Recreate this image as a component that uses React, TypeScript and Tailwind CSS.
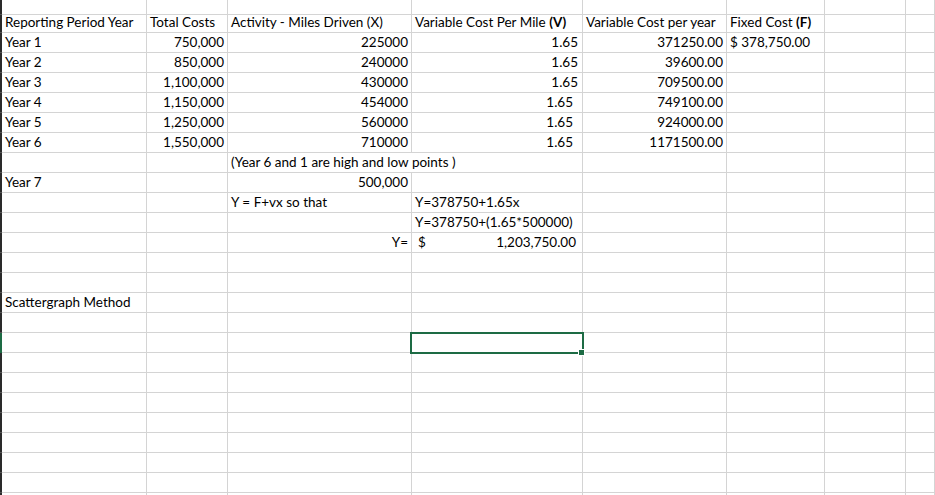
import React from "react";

/* Sheet layout: strip | A | B | C | D | E | F | G | H */
const cols = "grid grid-cols-[2px_145px_81px_184px_171px_144px_98px_81px_1fr]";
const cell = "relative border-r border-b border-[#d4d4d4] flex items-end whitespace-nowrap";
const open = "relative border-b border-[#d4d4d4] flex items-end whitespace-nowrap overflow-visible z-10";

type Cell = { text?: React.ReactNode; align?: "l" | "r"; pr?: string; flow?: boolean };

const Row: React.FC<{ cells: Cell[]; h?: string; selRow?: boolean; children?: React.ReactNode }> = ({
  cells,
  h = "h-[20px]",
  selRow,
}) => {
  return (
    <div className={`${cols} ${h}`}>
      <div className={selRow ? "bg-[#1d6b44]" : "bg-[#2a2a2a] border-b border-[#555]"}></div>
      {cells.map((c, i) => (
        <div
          key={i}
          className={`${c.flow ? open : cell} ${c.align === "r" ? "justify-end" : "justify-start"} ${
            c.align === "r" ? c.pr ?? "pr-[3px]" : "pl-[3px]"
          } pb-[2px]`}
        >
          {c.text}
        </div>
      ))}
    </div>
  );
};

const empty = (): Cell[] => Array.from({ length: 8 }, () => ({}));

const B: React.FC<{ children: React.ReactNode }> = ({ children }) => (
  <span className="font-bold">{children}</span>
);

const data = [
  ["Year 1", "750,000", "225000", "1.65", "371250.00", "pr-[4px]"],
  ["Year 2", "850,000", "240000", "1.65", "39600.00", "pr-[4px]"],
  ["Year 3", "1,100,000", "430000", "1.65", "709500.00", "pr-[4px]"],
  ["Year 4", "1,150,000", "454000", "1.65", "749100.00", "pr-[9px]"],
  ["Year 5", "1,250,000", "560000", "1.65", "924000.00", "pr-[9px]"],
  ["Year 6", "1,550,000", "710000", "1.65", "1171500.00", "pr-[9px]"],
];

const App: React.FC = () => {
  const rows: React.ReactNode[] = [];

  rows.push(<Row key="r0" cells={empty()} h="h-[15px]" />);

  rows.push(
    <Row
      key="r1"
      h="h-[18px]"
      cells={[
        { text: "Reporting Period Year" },
        { text: "Total Costs" },
        { text: "Activity - Miles Driven (X)" },
        { text: <span>Variable Cost Per Mile <B>(V)</B></span> },
        { text: "Variable Cost per year" },
        { text: <span>Fixed Cost <B>(F)</B></span> },
        {},
        {},
      ]}
    />
  );

  data.forEach((d, i) => {
    rows.push(
      <Row
        key={`y${i}`}
        cells={[
          { text: d[0] },
          { text: d[1], align: "r" },
          { text: d[2], align: "r" },
          { text: d[3], align: "r", pr: d[5] },
          { text: d[4], align: "r" },
          i === 0 ? { text: "$ 378,750.00", pr: "pl-[3px]" } : {},
          {},
          {},
        ]}
      />
    );
  });

  rows.push(
    <Row
      key="r8"
      cells={[
        {},
        {},
        { text: "(Year 6 and 1 are high and low points )", flow: true },
        {},
        {},
        {},
        {},
        {},
      ]}
    />
  );

  rows.push(
    <Row
      key="r9"
      cells={[{ text: "Year 7" }, {}, { text: "500,000", align: "r" }, {}, {}, {}, {}, {}]}
    />
  );

  rows.push(
    <Row
      key="r10"
      cells={[{}, {}, { text: "Y = F+vx so that" }, { text: "Y=378750+1.65x" }, {}, {}, {}, {}]}
    />
  );

  rows.push(
    <Row
      key="r11"
      cells={[{}, {}, {}, { text: "Y=378750+(1.65*500000)" }, {}, {}, {}, {}]}
    />
  );

  rows.push(
    <Row
      key="r12"
      cells={[
        {},
        {},
        { text: "Y=", align: "r" },
        {
          text: (
            <span className="flex w-full justify-between pl-[3px] pr-[6px]">
              <span>$</span>
              <span>1,203,750.00</span>
            </span>
          ),
        },
        {},
        {},
        {},
        {},
      ]}
    />
  );

  rows.push(<Row key="r13" cells={empty()} />);
  rows.push(<Row key="r14" cells={empty()} />);
  rows.push(
    <Row key="r15" cells={[{ text: "Scattergraph Method" }, {}, {}, {}, {}, {}, {}, {}]} />
  );
  rows.push(<Row key="r16" cells={empty()} />);

  rows.push(
    <Row
      key="r17"
      selRow
      cells={[
        {},
        {},
        {},
        {
          text: (
            <>
              <div className="absolute left-[-2px] top-[-1px] w-[174px] h-[22px] border-2 border-[#1d6b44] z-20"></div>
              <div className="absolute left-[166px] top-[16px] w-[7px] h-[7px] bg-[#1d6b44] border border-white z-30"></div>
            </>
          ),
        },
        {},
        {},
        {},
        {},
      ]}
    />
  );

  for (let i = 18; i < 26; i++) rows.push(<Row key={`e${i}`} cells={empty()} />);

  return (
    <div
      className="w-[935px] h-[495px] overflow-hidden bg-white text-[13.5px] leading-[15px] text-black"
      style={{ fontFamily: "Lato, 'Open Sans', sans-serif" }}
    >
      {rows}
    </div>
  );
};

export default App;
